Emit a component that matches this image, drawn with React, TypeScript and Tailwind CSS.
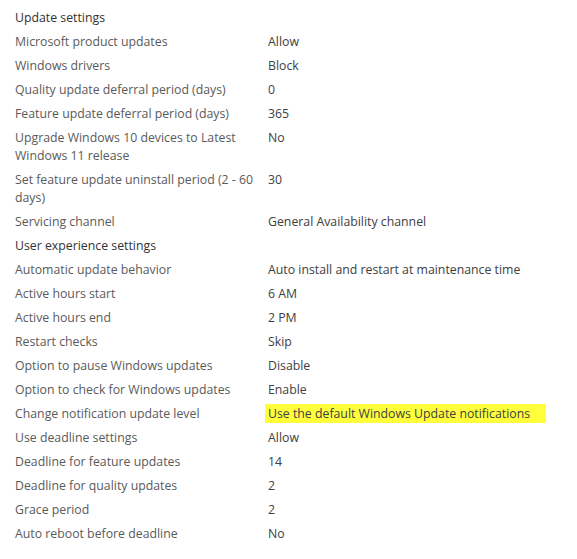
const rows: { label: string; value?: string; header?: boolean; mark?: boolean }[] = [
  { label: 'Update settings', header: true },
  { label: 'Microsoft product updates', value: 'Allow' },
  { label: 'Windows drivers', value: 'Block' },
  { label: 'Quality update deferral period (days)', value: '0' },
  { label: 'Feature update deferral period (days)', value: '365' },
  { label: 'Upgrade Windows 10 devices to Latest Windows 11 release', value: 'No' },
  { label: 'Set feature update uninstall period (2 - 60 days)', value: '30' },
  { label: 'Servicing channel', value: 'General Availability channel' },
  { label: 'User experience settings', header: true },
  { label: 'Automatic update behavior', value: 'Auto install and restart at maintenance time' },
  { label: 'Active hours start', value: '6 AM' },
  { label: 'Active hours end', value: '2 PM' },
  { label: 'Restart checks', value: 'Skip' },
  { label: 'Option to pause Windows updates', value: 'Disable' },
  { label: 'Option to check for Windows updates', value: 'Enable' },
  { label: 'Change notification update level', value: 'Use the default Windows Update notifications', mark: true },
  { label: 'Use deadline settings', value: 'Allow' },
  { label: 'Deadline for feature updates', value: '14' },
  { label: 'Deadline for quality updates', value: '2' },
  { label: 'Grace period', value: '2' },
  { label: 'Auto reboot before deadline', value: 'No' },
];

export default function App() {
  return (
    <div className="w-[577px] h-[559px] bg-white pt-[6px] pl-[15px] font-['Open_Sans',sans-serif] text-[12.3px] leading-[18px]">
      {rows.map((r) => (
        <div key={r.label} className="flex py-[3px]">
          <div className={`w-[245px] shrink-0 ${r.header ? 'text-[#333333]' : 'text-[#5a5a5a]'}`}>{r.label}</div>
          <div className="ml-[8px] text-[#404040]">
            {r.value && (r.mark ? (
              <span className="bg-[#ffff3c] -ml-[3px] pl-[3px] pr-[16px] py-[1px]">{r.value}</span>
            ) : r.value)}
          </div>
        </div>
      ))}
    </div>
  );
}
